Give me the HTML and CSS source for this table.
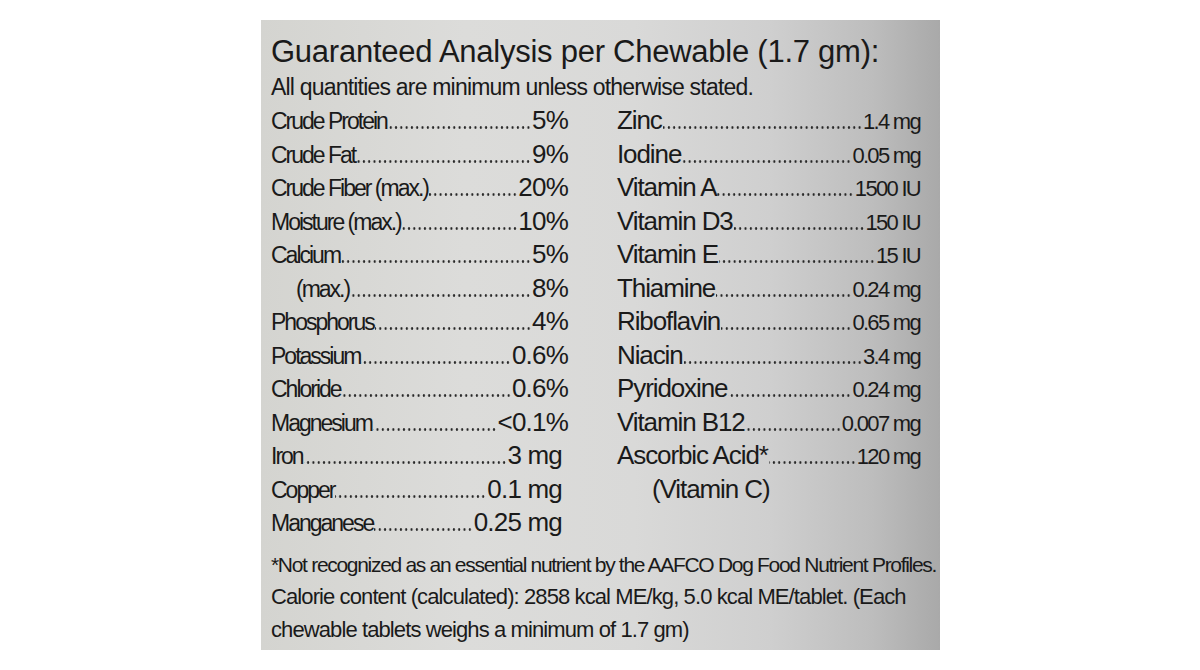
FILE: index.html
```html
<!DOCTYPE html>
<html lang="en">
<head>
<meta charset="utf-8">
<title>Guaranteed Analysis</title>
<link rel="stylesheet" href="styles.css">
</head>
<body>
<main class="label">
  <h1 class="title">Guaranteed Analysis per Chewable (1.7 gm):</h1>
  <p class="subtitle">All quantities are minimum unless otherwise stated.</p>
  <div class="cols">
    <ul class="col col-left">
      <li class="row"><span class="name">Crude Protein</span><span class="dots"></span><span class="val">5%</span></li>
      <li class="row"><span class="name">Crude Fat</span><span class="dots"></span><span class="val">9%</span></li>
      <li class="row"><span class="name">Crude Fiber (max.)</span><span class="dots"></span><span class="val">20%</span></li>
      <li class="row"><span class="name">Moisture (max.)</span><span class="dots"></span><span class="val">10%</span></li>
      <li class="row"><span class="name">Calcium</span><span class="dots"></span><span class="val">5%</span></li>
      <li class="row indent"><span class="name">(max.)</span><span class="dots"></span><span class="val">8%</span></li>
      <li class="row"><span class="name">Phosphorus</span><span class="dots"></span><span class="val">4%</span></li>
      <li class="row"><span class="name">Potassium</span><span class="dots"></span><span class="val">0.6%</span></li>
      <li class="row"><span class="name">Chloride</span><span class="dots"></span><span class="val">0.6%</span></li>
      <li class="row"><span class="name">Magnesium</span><span class="dots"></span><span class="val">&lt;0.1%</span></li>
      <li class="row short"><span class="name">Iron</span><span class="dots"></span><span class="val">3 mg</span></li>
      <li class="row short"><span class="name">Copper</span><span class="dots"></span><span class="val">0.1 mg</span></li>
      <li class="row short"><span class="name">Manganese</span><span class="dots"></span><span class="val">0.25 mg</span></li>
    </ul>
    <ul class="col col-right">
      <li class="row"><span class="name">Zinc</span><span class="dots"></span><span class="val">1.4 mg</span></li>
      <li class="row"><span class="name">Iodine</span><span class="dots"></span><span class="val">0.05 mg</span></li>
      <li class="row"><span class="name">Vitamin A</span><span class="dots"></span><span class="val">1500 IU</span></li>
      <li class="row"><span class="name">Vitamin D3</span><span class="dots"></span><span class="val">150 IU</span></li>
      <li class="row"><span class="name">Vitamin E</span><span class="dots"></span><span class="val">15 IU</span></li>
      <li class="row"><span class="name">Thiamine</span><span class="dots"></span><span class="val">0.24 mg</span></li>
      <li class="row"><span class="name">Riboflavin</span><span class="dots"></span><span class="val">0.65 mg</span></li>
      <li class="row"><span class="name">Niacin</span><span class="dots"></span><span class="val">3.4 mg</span></li>
      <li class="row"><span class="name">Pyridoxine</span><span class="dots"></span><span class="val">0.24 mg</span></li>
      <li class="row"><span class="name">Vitamin B12</span><span class="dots"></span><span class="val">0.007 mg</span></li>
      <li class="row"><span class="name">Ascorbic Acid*</span><span class="dots"></span><span class="val">120 mg</span></li>
      <li class="row indent"><span class="name">(Vitamin C)</span></li>
    </ul>
  </div>
  <div class="notes">
    <p class="note n1">*Not recognized as an essential nutrient by the AAFCO Dog Food Nutrient Profiles.</p>
    <p class="note n2">Calorie content (calculated): 2858 kcal ME/kg, 5.0 kcal ME/tablet. (Each</p>
    <p class="note n3">chewable tablets weighs a minimum of 1.7 gm)</p>
  </div>
</main>
</body>
</html>
```

FILE: styles.css
```css
html, body {
  margin: 0;
  padding: 0;
  background: #ffffff;
}
body {
  width: 1200px;
  height: 670px;
  overflow: hidden;
  display: flex;
  justify-content: flex-start;
  align-items: flex-start;
}
.label {
  margin: 20px 0 0 261px;
  width: 679px;
  height: 630px;
  box-sizing: border-box;
  padding: 15px 0 0 10px;
  color: #1a1a1a;
  font-family: "Liberation Sans", "DejaVu Sans", sans-serif;
  background: linear-gradient(90deg, #d4d4d0 0%, #dcdcda 30%, #d9d9d8 55%, #cfcfcf 75%, #bdbdbd 90%, #a9a9a9 100%);
  overflow: hidden;
}
.title {
  margin: 0;
  font-weight: normal;
  font-size: 31px;
  line-height: 34px;
  letter-spacing: -0.25px;
  white-space: nowrap;
}
.subtitle {
  margin: 5px 0 0;
  font-size: 23px;
  line-height: 26px;
  letter-spacing: -0.8px;
  white-space: nowrap;
}
.cols {
  display: grid;
  grid-template-columns: 297px 303px;
  column-gap: 49px;
  margin-top: 4px;
}
.col {
  list-style: none;
  margin: 0;
  padding: 0;
}
.row {
  display: flex;
  align-items: baseline;
  height: 33.5px;
  line-height: 33.5px;
  white-space: nowrap;
}
.dots {
  flex: 1;
  height: 3px;
  margin: 0 1px;
  background-image: radial-gradient(circle, #262626 1px, transparent 1.4px);
  background-size: 5.3px 3px;
  background-repeat: repeat-x;
  background-position: right 0 bottom 0;
}
.col-left .name {
  font-size: 23px;
  letter-spacing: -2px;
}
.col-left .val {
  font-size: 26px;
  letter-spacing: -0.8px;
}
.col-left .indent .name {
  padding-left: 25px;
}
.col-left .short .val {
  margin-right: 6px;
}
.col-right .name {
  font-size: 26px;
  letter-spacing: -1.1px;
}
.col-right .val {
  font-size: 22px;
  letter-spacing: -1.7px;
}
.col-right .indent .name {
  padding-left: 35px;
}
.notes {
  margin-top: 9px;
}
.note {
  margin: 0;
  white-space: nowrap;
  line-height: 32.5px;
}
.n1 {
  font-size: 21px;
  letter-spacing: -1.3px;
}
.n2 {
  font-size: 22px;
  letter-spacing: -0.9px;
}
.n3 {
  font-size: 22px;
  letter-spacing: -0.9px;
}
```
